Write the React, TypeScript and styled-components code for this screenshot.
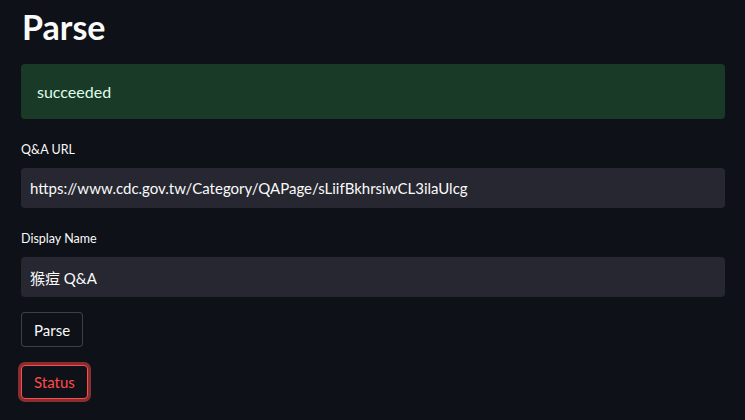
import React from "react";
import styled, { createGlobalStyle } from "styled-components";

const Global = createGlobalStyle`
  html, body { margin: 0; padding: 0; background: #0e1117; }
  body { font-family: Lato, "Noto Sans CJK TC", sans-serif; color: #fafafa; }
`;

const Page = styled.div`
  width: 745px;
  height: 420px;
  box-sizing: border-box;
  padding: 0 20px 0 21px;
  display: flex;
  flex-direction: column;
  overflow: hidden;
`;

const Title = styled.h1`
  margin: 0;
  padding: 6px 0 0 1px;
  font-size: 34px;
  font-weight: 700;
  line-height: 42px;
  color: #fafafa;
`;

const Alert = styled.div`
  margin-top: 16px;
  height: 55px;
  box-sizing: border-box;
  padding: 0 16px;
  display: flex;
  align-items: center;
  background: #1a3a28;
  border-radius: 4px;
  color: #dffde9;
  font-size: 16px;
`;

const Field = styled.div`
  display: flex;
  flex-direction: column;
  margin-top: ${(p: { $top: number }) => p.$top}px;
`;

const Label = styled.label`
  font-size: 12.5px;
  line-height: 20px;
  color: #fafafa;
  margin-bottom: 8px;
`;

const Input = styled.div`
  height: 40px;
  box-sizing: border-box;
  background: #262730;
  border-radius: 4px;
  padding: 0 9px;
  display: flex;
  align-items: center;
  font-size: 15px;
  color: #fafafa;
  white-space: nowrap;
`;

const Button = styled.button<{ $focus?: boolean }>`
  align-self: flex-start;
  font-family: inherit;
  font-size: 15px;
  height: ${(p) => (p.$focus ? 34 : 35)}px;
  padding: 0 12px;
  background: #0e1117;
  border-radius: 4px;
  border: 1px solid ${(p) => (p.$focus ? "#ff4b4b" : "rgba(250,250,250,0.2)")};
  color: ${(p) => (p.$focus ? "#ff4b4b" : "#fafafa")};
  box-shadow: ${(p) => (p.$focus ? "0 0 0 3px rgba(255,75,75,0.5)" : "none")};
  margin-top: ${(p) => (p.$focus ? 18 : 15)}px;
  cursor: pointer;
`;

export default function App() {
  return (
    <>
      <Global />
      <Page>
        <Title>Parse</Title>
        <Alert>succeeded</Alert>
        <Field $top={21}>
          <Label>Q&amp;A URL</Label>
          <Input>https://www.cdc.gov.tw/Category/QAPage/sLiifBkhrsiwCL3ilaUlcg</Input>
        </Field>
        <Field $top={21}>
          <Label>Display Name</Label>
          <Input>猴痘 Q&amp;A</Input>
        </Field>
        <Button>Parse</Button>
        <Button $focus>Status</Button>
      </Page>
    </>
  );
}
